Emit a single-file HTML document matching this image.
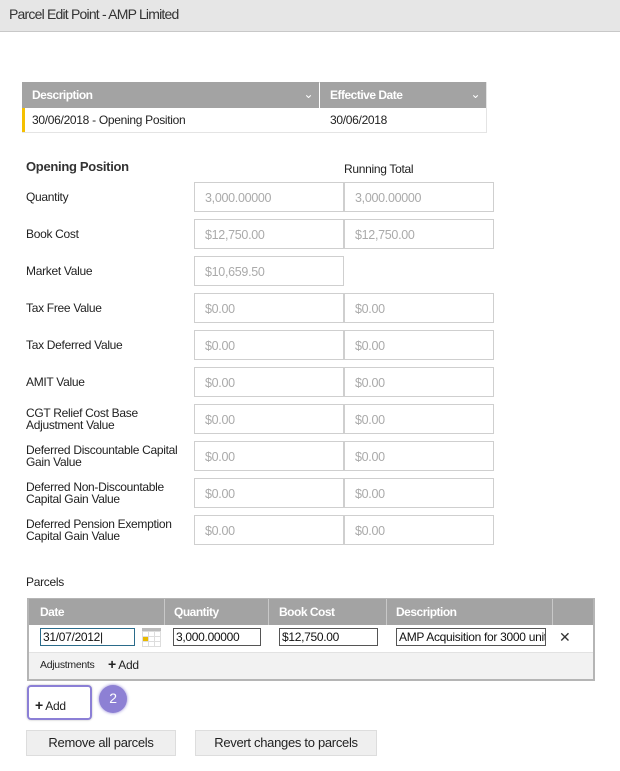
<!DOCTYPE html>
<html><head><meta charset="utf-8"><style>
*{box-sizing:border-box;margin:0;padding:0}
body{width:620px;height:771px;background:#fff;font-family:"Liberation Sans",sans-serif;color:#222;position:relative;overflow:hidden;letter-spacing:-0.3px}
.a{position:absolute}
.hdr{left:0;top:0;width:620px;height:32px;background:#e6e6e6;border-bottom:1px solid #c8c8c8;font-size:14px;padding:6px 0 0 9px;color:#333;letter-spacing:-0.8px}
.th{background:#a3a3a3;color:#fff;font-weight:bold;font-size:12px;letter-spacing:-0.5px}
.lbl{font-size:12px;left:26px;line-height:12px;color:#222}
.in{width:150px;height:30px;border:1px solid #cfcfcf;color:#aaa;font-size:12.5px;padding:8px 0 0 10px}
.pi{height:18px;border:1px solid #555;font-size:12px;padding:1px 0 0 2px;color:#111;white-space:nowrap;overflow:hidden}
.btn{background:#efefef;border:1px solid #ddd;font-size:13px;text-align:center;line-height:24px;color:#222}
</style></head><body>
<div class="a hdr">Parcel Edit Point - AMP Limited</div>

<div class="a" style="left:22px;top:82px;width:465px;height:51px;border:1px solid #e4e4e4"></div>
<div class="a th" style="left:22px;top:82px;width:297px;height:26px;padding:6px 10px">Description<span style="position:absolute;right:6px;top:5px;font-weight:normal">⌄</span></div>
<div class="a th" style="left:320px;top:82px;width:166px;height:26px;padding:6px 10px">Effective Date<span style="position:absolute;right:6px;top:5px;font-weight:normal">⌄</span></div>
<div class="a" style="left:22px;top:108px;width:3px;height:24px;background:#f5c000"></div>
<div class="a" style="left:32px;top:113px;font-size:12px">30/06/2018 - Opening Position</div>
<div class="a" style="left:330px;top:113px;font-size:12px">30/06/2018</div>

<div class="a" style="left:26px;top:159px;font-size:13px;font-weight:bold;color:#333">Opening Position</div>
<div class="a" style="left:344px;top:162px;font-size:12px">Running Total</div>

<div class="a lbl" style="top:191px">Quantity</div>
<div class="a in" style="left:194px;top:182px">3,000.00000</div><div class="a in" style="left:344px;top:182px">3,000.00000</div>
<div class="a lbl" style="top:228px">Book Cost</div>
<div class="a in" style="left:194px;top:219px">$12,750.00</div><div class="a in" style="left:344px;top:219px">$12,750.00</div>
<div class="a lbl" style="top:265px">Market Value</div>
<div class="a in" style="left:194px;top:256px">$10,659.50</div>
<div class="a lbl" style="top:302px">Tax Free Value</div>
<div class="a in" style="left:194px;top:293px">$0.00</div><div class="a in" style="left:344px;top:293px">$0.00</div>
<div class="a lbl" style="top:339px">Tax Deferred Value</div>
<div class="a in" style="left:194px;top:330px">$0.00</div><div class="a in" style="left:344px;top:330px">$0.00</div>
<div class="a lbl" style="top:376px">AMIT Value</div>
<div class="a in" style="left:194px;top:367px">$0.00</div><div class="a in" style="left:344px;top:367px">$0.00</div>
<div class="a lbl" style="top:407px">CGT Relief Cost Base<br>Adjustment Value</div>
<div class="a in" style="left:194px;top:404px">$0.00</div><div class="a in" style="left:344px;top:404px">$0.00</div>
<div class="a lbl" style="top:444px">Deferred Discountable Capital<br>Gain Value</div>
<div class="a in" style="left:194px;top:441px">$0.00</div><div class="a in" style="left:344px;top:441px">$0.00</div>
<div class="a lbl" style="top:481px">Deferred Non-Discountable<br>Capital Gain Value</div>
<div class="a in" style="left:194px;top:478px">$0.00</div><div class="a in" style="left:344px;top:478px">$0.00</div>
<div class="a lbl" style="top:518px">Deferred Pension Exemption<br>Capital Gain Value</div>
<div class="a in" style="left:194px;top:515px">$0.00</div><div class="a in" style="left:344px;top:515px">$0.00</div>

<div class="a" style="left:26px;top:575px;font-size:12px">Parcels</div>
<div class="a" style="left:27px;top:598px;width:568px;height:83px;border:2px solid #b5b5b5"></div>
<div class="a th" style="left:29px;top:599px;width:564px;height:26px"></div>
<div class="a" style="left:164px;top:599px;width:1px;height:26px;background:#c8c8c8"></div>
<div class="a" style="left:268px;top:599px;width:1px;height:26px;background:#c8c8c8"></div>
<div class="a" style="left:386px;top:599px;width:1px;height:26px;background:#c8c8c8"></div>
<div class="a" style="left:552px;top:599px;width:1px;height:26px;background:#c8c8c8"></div>
<div class="a th" style="left:40px;top:605px;background:none">Date</div>
<div class="a th" style="left:174px;top:605px;background:none">Quantity</div>
<div class="a th" style="left:279px;top:605px;background:none">Book Cost</div>
<div class="a th" style="left:396px;top:605px;background:none">Description</div>
<div class="a pi" style="left:40px;top:628px;width:95px;border-color:#2a6b8a">31/07/2012|</div>
<svg class="a" style="left:142px;top:628px" width="19" height="19"><rect x="0" y="0" width="19" height="3" fill="#bbb"/><g stroke="#ddd" fill="none"><rect x="0.5" y="3.5" width="18" height="15"/><line x1="6.5" y1="3" x2="6.5" y2="19"/><line x1="12.5" y1="3" x2="12.5" y2="19"/><line x1="0" y1="8.5" x2="19" y2="8.5"/><line x1="0" y1="13.5" x2="19" y2="13.5"/></g><rect x="1" y="9" width="5" height="4" fill="#e8b900"/></svg>
<div class="a pi" style="left:173px;top:628px;width:88px">3,000.00000</div>
<div class="a pi" style="left:279px;top:628px;width:99px">$12,750.00</div>
<div class="a pi" style="left:396px;top:628px;width:150px">AMP Acquisition for 3000 units</div>
<div class="a" style="left:559px;top:629px;font-size:14px;color:#333">✕</div>
<div class="a" style="left:29px;top:652px;width:564px;height:27px;background:#f2f2f2;border-top:1px solid #e2e2e2"></div>
<div class="a" style="left:40px;top:659px;font-size:10.5px">Adjustments</div>
<div class="a" style="left:108px;top:656px;font-size:12px"><b style="font-size:14px">+</b> Add</div>

<div class="a" style="left:27px;top:685px;width:65px;height:35px;border:2px solid #8b7fd6;border-radius:4px;box-shadow:0 0 2px #bbb"></div>
<div class="a" style="left:35px;top:697px;font-size:12px"><b style="font-size:14px">+</b> Add</div>
<div class="a" style="left:99px;top:685px;width:28px;height:28px;border-radius:50%;background:#8d80d4;color:#fff;text-align:center;line-height:26px;font-size:14px;box-shadow:0 0 3px #8d80d4">2</div>

<div class="a btn" style="left:26px;top:730px;width:150px;height:26px">Remove all parcels</div>
<div class="a btn" style="left:195px;top:730px;width:182px;height:26px">Revert changes to parcels</div>
</body></html>
